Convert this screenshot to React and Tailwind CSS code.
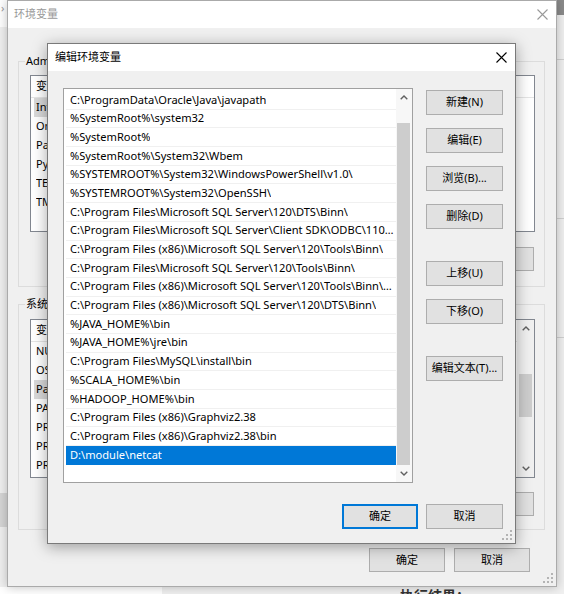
import React from "react";

// 编辑环境变量 dialog over the 环境变量 window (Windows 10 look)
const paths = [
  "C:\\ProgramData\\Oracle\\Java\\javapath",
  "%SystemRoot%\\system32",
  "%SystemRoot%",
  "%SystemRoot%\\System32\\Wbem",
  "%SYSTEMROOT%\\System32\\WindowsPowerShell\\v1.0\\",
  "%SYSTEMROOT%\\System32\\OpenSSH\\",
  "C:\\Program Files\\Microsoft SQL Server\\120\\DTS\\Binn\\",
  "C:\\Program Files\\Microsoft SQL Server\\Client SDK\\ODBC\\110\\Tools\\Binn\\",
  "C:\\Program Files (x86)\\Microsoft SQL Server\\120\\Tools\\Binn\\",
  "C:\\Program Files\\Microsoft SQL Server\\120\\Tools\\Binn\\",
  "C:\\Program Files (x86)\\Microsoft SQL Server\\120\\Tools\\Binn\\ManagementStudio\\",
  "C:\\Program Files (x86)\\Microsoft SQL Server\\120\\DTS\\Binn\\",
  "%JAVA_HOME%\\bin",
  "%JAVA_HOME%\\jre\\bin",
  "C:\\Program Files\\MySQL\\install\\bin",
  "%SCALA_HOME%\\bin",
  "%HADOOP_HOME%\\bin",
  "C:\\Program Files (x86)\\Graphviz2.38",
  "C:\\Program Files (x86)\\Graphviz2.38\\bin",
  "D:\\module\\netcat",
];

const userVars = ["IntelliJ IDEA", "OneDrive", "Path", "PyCharm", "TEMP", "TMP"];
const sysVars = [
  "NUMBER_OF_PROCESSORS",
  "OS",
  "Path",
  "PATHEXT",
  "PROCESSOR_ARCHITECTURE",
  "PROCESSOR_IDENTIFIER",
  "PROCESSOR_LEVEL",
];

const CloseX = ({ color = "#000" }) => (
  <svg width="11" height="11" viewBox="0 0 11 11">
    <path d="M0.5 0.5L10.5 10.5M10.5 0.5L0.5 10.5" stroke={color} strokeWidth="1.1" fill="none" />
  </svg>
);

const Chevron = ({ up }) => (
  <svg width="8" height="5" viewBox="0 0 8 5">
    <polyline
      points={up ? "0.7,4.3 4,1 7.3,4.3" : "0.7,0.7 4,4 7.3,0.7"}
      stroke="#606060"
      strokeWidth="1.4"
      fill="none"
    />
  </svg>
);

const Grip = () => (
  <svg width="12" height="12" viewBox="0 0 12 12">
    {[
      [9, 1],
      [9, 5],
      [5, 5],
      [9, 9],
      [5, 9],
      [1, 9],
    ].map(([x, y]) => (
      <rect key={`${x}-${y}`} x={x} y={y} width="2" height="2" fill="#b4b4b4" />
    ))}
  </svg>
);

const Btn = ({ children, w = "w-[77px]", h = "h-[25px]", focus = false, className = "" }) => (
  <div
    className={`flex ${w} ${h} shrink-0 items-center justify-center border bg-[#e1e1e1] text-[11px] text-black ${
      focus ? "border-[#0078d7] shadow-[inset_0_0_0_1px_#0078d7]" : "border-[#adadad]"
    } ${className}`}
  >
    {children}
  </div>
);

const OuterList = ({ items, selected, height, scroll }) => (
  <div className={`flex ${height} border border-[#828790] bg-white`}>
    <div className="flex min-w-0 flex-1 flex-col">
      <div className="flex h-[22px] shrink-0 items-center border-b border-[#e5e5e5] pl-[5px] text-[11px]">
        <span className="w-[160px]">变量</span>
        <span className="border-l border-[#e5e5e5] pl-[6px]">值</span>
      </div>
      <div className="flex flex-col pl-[3px]">
        {items.map((name) => (
          <div
            key={name}
            className={`flex h-[19px] w-[150px] items-center pl-[2px] text-[11px] ${
              name === selected ? "bg-[#d9d9d9]" : ""
            }`}
          >
            <span className="truncate">{name}</span>
          </div>
        ))}
      </div>
    </div>
    {scroll && (
      <div className="flex w-[17px] shrink-0 flex-col bg-[#f0f0f0]">
        <div className="flex h-[17px] items-center justify-center">
          <Chevron up />
        </div>
        <div className="h-[37px]" />
        <div className="mx-[2px] h-[43px] bg-[#cdcdcd]" />
        <div className="flex-1" />
        <div className="flex h-[17px] items-center justify-center">
          <Chevron />
        </div>
      </div>
    )}
  </div>
);

export default function App() {
  return (
    <div className="relative h-[594px] w-[564px] overflow-hidden bg-[#f0f0f0] font-['Noto_Sans','Noto_Sans_CJK_SC',sans-serif] text-black">
      {/* bits of the desktop behind */}
      <div className="absolute left-0 top-0 h-[27px] w-[8px] bg-white" />
      <span className="absolute left-[1px] top-[2px] text-[11px] leading-none text-[#9a9a9a]">›</span>
      <div className="absolute left-0 top-[493px] h-[34px] w-[8px] bg-[#d6d6d6]" />
      <div className="absolute right-0 top-0 h-[15px] w-[8px] bg-[#8a8a8a]" />
      <div className="absolute right-0 top-[59px] h-px w-[8px] bg-[#d0d0d0]" />
      <div className="absolute right-0 top-[218px] h-px w-[8px] bg-[#d0d0d0]" />
      <div className="absolute right-0 top-[337px] h-px w-[8px] bg-[#d0d0d0]" />
      <div className="absolute left-0 top-[587px] h-[7px] w-[162px] bg-white" />
      <div className="absolute left-[400px] top-[589px] h-[5px] w-[90px] overflow-hidden">
        <span className="block text-[14px] font-semibold leading-none text-[#333]">执行结果：</span>
      </div>

      {/* 环境变量 window */}
      <div className="absolute left-[7px] top-0 flex h-[587px] w-[550px] flex-col border border-[#aaaaaa] bg-[#f0f0f0] shadow-[0_0_10px_rgba(0,0,0,0.25)]">
        <div className="flex h-[27px] shrink-0 items-center justify-between bg-white pl-[6px] pr-[8px]">
          <span className="text-[11px] text-[#999999]">环境变量</span>
          <CloseX color="#999999" />
        </div>
        <div className="flex flex-1 flex-col pl-[10px] pr-[11px]">
          <div className="relative mt-[33px] flex flex-col border border-[#dcdcdc] pb-[15px] pl-[11px] pr-[9px] pt-[13px]">
            <span className="absolute left-[6px] top-[-9px] bg-[#f0f0f0] px-[1px] text-[11px]">
              Administrator 的用户变量(U)
            </span>
            <OuterList items={userVars} selected="IntelliJ IDEA" height="h-[157px]" />
            <div className="mr-[1px] mt-[15px] flex justify-end gap-[8px]">
              <Btn w="w-[75px]" h="h-[24px]">新建(N)...</Btn>
              <Btn w="w-[75px]" h="h-[24px]">编辑(E)...</Btn>
              <Btn w="w-[84px]" h="h-[24px]" className="pr-[9px]">删除(D)</Btn>
            </div>
          </div>
          <div className="relative mt-[17px] flex flex-col border border-[#dcdcdc] pb-[13px] pl-[11px] pr-[9px] pt-[14px]">
            <span className="absolute left-[6px] top-[-9px] bg-[#f0f0f0] px-[1px] text-[11px]">系统变量(S)</span>
            <OuterList items={sysVars} selected="Path" height="h-[159px]" scroll />
            <div className="mr-[1px] mt-[14px] flex justify-end gap-[8px]">
              <Btn w="w-[75px]" h="h-[24px]">新建(W)...</Btn>
              <Btn w="w-[75px]" h="h-[24px]">编辑(I)...</Btn>
              <Btn w="w-[84px]" h="h-[24px]" className="pr-[9px]">删除(L)</Btn>
            </div>
          </div>
          <div className="mr-[15px] mt-[18px] flex justify-end gap-[9px]">
            <Btn w="w-[76px]" h="h-[24px]">确定</Btn>
            <Btn w="w-[76px]" h="h-[24px]">取消</Btn>
          </div>
        </div>
        <div className="absolute bottom-[2px] right-[2px]">
          <Grip />
        </div>
      </div>

      {/* 编辑环境变量 dialog */}
      <div className="absolute left-[47px] top-[43px] flex h-[501px] w-[469px] flex-col border border-[#7a7a7a] bg-[#f0f0f0] shadow-[0_3px_14px_rgba(0,0,0,0.35)]">
        <div className="flex h-[27px] shrink-0 items-center justify-between bg-white pl-[7px] pr-[8px]">
          <span className="text-[11px]">编辑环境变量</span>
          <CloseX />
        </div>
        <div className="flex flex-1 flex-col pl-[15px] pr-[12px] pt-[17px]">
          <div className="flex gap-[13px]">
            <div className="flex h-[395px] w-[350px] shrink-0 border border-[#a0a0a0] bg-white">
              <div className="flex min-w-0 flex-1 flex-col pl-[2px] pt-[2px]">
                {paths.map((p, i) => (
                  <div
                    key={p}
                    className={`flex h-[18.7px] shrink-0 items-center border-b pl-[4px] text-[11.1px] ${
                      i === paths.length - 1
                        ? "border-[#0078d7] bg-[#0078d7] text-white"
                        : "border-[#f0f0f0]"
                    }`}
                  >
                    <span className="truncate">{p}</span>
                  </div>
                ))}
              </div>
              <div className="flex w-[16px] shrink-0 flex-col bg-[#f7f7f7]">
                <div className="flex h-[17px] items-center justify-center">
                  <Chevron up />
                </div>
                <div className="h-[17px]" />
                <div className="ml-[1px] mr-[2px] h-[342px] bg-[#cdcdcd]" />
                <div className="flex-1" />
                <div className="flex h-[17px] items-center justify-center">
                  <Chevron />
                </div>
              </div>
            </div>
            <div className="mt-[2px] flex flex-col">
              <Btn>新建(N)</Btn>
              <Btn className="mt-[13px]">编辑(E)</Btn>
              <Btn className="mt-[13px]">浏览(B)...</Btn>
              <Btn className="mt-[13px]">删除(D)</Btn>
              <Btn className="mt-[32px]">上移(U)</Btn>
              <Btn className="mt-[13px]">下移(O)</Btn>
              <Btn className="mt-[32px]">编辑文本(T)...</Btn>
            </div>
          </div>
          <div className="mt-[21px] flex justify-end gap-[8px]">
            <Btn w="w-[76px]" focus>
              确定
            </Btn>
            <Btn>取消</Btn>
          </div>
        </div>
        <div className="absolute bottom-[2px] right-[2px]">
          <Grip />
        </div>
      </div>
    </div>
  );
}
